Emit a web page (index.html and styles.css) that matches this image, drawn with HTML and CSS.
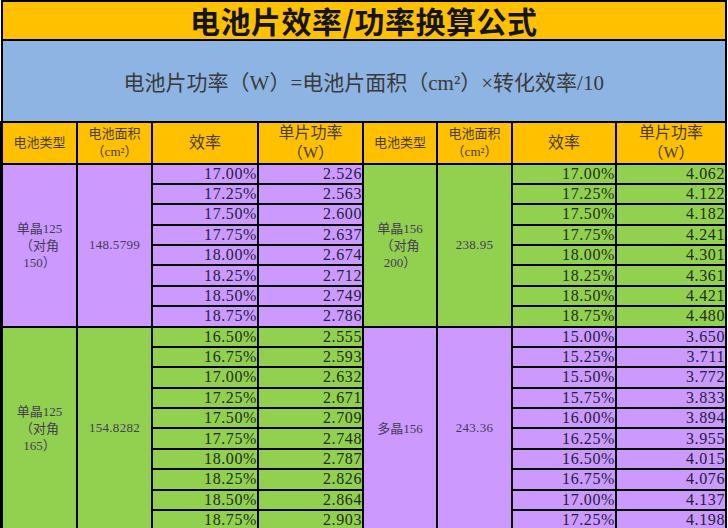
FILE: index.html
```html
<!DOCTYPE html>
<html lang="zh-CN">
<head>
<meta charset="utf-8">
<title>电池片效率/功率换算公式</title>
<link rel="stylesheet" href="styles.css">
</head>
<body>
<table class="sheet">
  <colgroup>
    <col class="c1"><col class="c2"><col class="c3"><col class="c4">
    <col class="c5"><col class="c6"><col class="c7"><col class="c8">
  </colgroup>
  <tr class="r-title"><td colspan="8" class="title">电池片效率/功率换算公式</td></tr>
  <tr class="r-formula"><td colspan="8" class="formula">电池片功率（W）=电池片面积（cm²）×转化效率/10</td></tr>
  <tr class="r-head">
    <td class="head small first">电池类型</td>
    <td class="head small">电池面积<br>（cm²）</td>
    <td class="head big">效率</td>
    <td class="head big">单片功率<br>（W）</td>
    <td class="head small">电池类型</td>
    <td class="head small">电池面积<br>（cm²）</td>
    <td class="head big">效率</td>
    <td class="head big">单片功率<br>（W）</td>
  </tr>
  <tr class="r-data">
    <td class="type purple first" rowspan="8">单晶125<br>（对角<br>150）</td>
    <td class="area purple" rowspan="8">148.5799</td>
    <td class="num purple">17.00%</td><td class="num purple">2.526</td>
    <td class="type green" rowspan="8">单晶156<br>（对角<br>200）</td>
    <td class="area green" rowspan="8">238.95</td>
    <td class="num green">17.00%</td><td class="num green">4.062</td>
  </tr>
  <tr class="r-data"><td class="num purple">17.25%</td><td class="num purple">2.563</td><td class="num green">17.25%</td><td class="num green">4.122</td></tr>
  <tr class="r-data"><td class="num purple">17.50%</td><td class="num purple">2.600</td><td class="num green">17.50%</td><td class="num green">4.182</td></tr>
  <tr class="r-data"><td class="num purple">17.75%</td><td class="num purple">2.637</td><td class="num green">17.75%</td><td class="num green">4.241</td></tr>
  <tr class="r-data"><td class="num purple">18.00%</td><td class="num purple">2.674</td><td class="num green">18.00%</td><td class="num green">4.301</td></tr>
  <tr class="r-data"><td class="num purple">18.25%</td><td class="num purple">2.712</td><td class="num green">18.25%</td><td class="num green">4.361</td></tr>
  <tr class="r-data"><td class="num purple">18.50%</td><td class="num purple">2.749</td><td class="num green">18.50%</td><td class="num green">4.421</td></tr>
  <tr class="r-data"><td class="num purple">18.75%</td><td class="num purple">2.786</td><td class="num green">18.75%</td><td class="num green">4.480</td></tr>
  <tr class="r-data">
    <td class="type green first" rowspan="10">单晶125<br>（对角<br>165）</td>
    <td class="area green" rowspan="10">154.8282</td>
    <td class="num green">16.50%</td><td class="num green">2.555</td>
    <td class="type purple" rowspan="10">多晶156</td>
    <td class="area purple" rowspan="10">243.36</td>
    <td class="num purple">15.00%</td><td class="num purple">3.650</td>
  </tr>
  <tr class="r-data"><td class="num green">16.75%</td><td class="num green">2.593</td><td class="num purple">15.25%</td><td class="num purple">3.711</td></tr>
  <tr class="r-data"><td class="num green">17.00%</td><td class="num green">2.632</td><td class="num purple">15.50%</td><td class="num purple">3.772</td></tr>
  <tr class="r-data"><td class="num green">17.25%</td><td class="num green">2.671</td><td class="num purple">15.75%</td><td class="num purple">3.833</td></tr>
  <tr class="r-data"><td class="num green">17.50%</td><td class="num green">2.709</td><td class="num purple">16.00%</td><td class="num purple">3.894</td></tr>
  <tr class="r-data"><td class="num green">17.75%</td><td class="num green">2.748</td><td class="num purple">16.25%</td><td class="num purple">3.955</td></tr>
  <tr class="r-data"><td class="num green">18.00%</td><td class="num green">2.787</td><td class="num purple">16.50%</td><td class="num purple">4.015</td></tr>
  <tr class="r-data"><td class="num green">18.25%</td><td class="num green">2.826</td><td class="num purple">16.75%</td><td class="num purple">4.076</td></tr>
  <tr class="r-data"><td class="num green">18.50%</td><td class="num green">2.864</td><td class="num purple">17.00%</td><td class="num purple">4.137</td></tr>
  <tr class="r-data"><td class="num green">18.75%</td><td class="num green">2.903</td><td class="num purple">17.25%</td><td class="num purple">4.198</td></tr>
</table>
</body>
</html>
```
FILE: styles.css
```css
html, body {
  margin: 0;
  padding: 0;
  background: #ffffff;
  overflow: hidden;
}

.sheet {
  border-collapse: collapse;
  table-layout: fixed;
  width: 727px;
  font-family: "Liberation Serif", "Noto Sans CJK SC", serif;
  color: #1e1e30;
}

.c1 { width: 75.5px; }
.c2 { width: 75px; }
.c3 { width: 106px; }
.c4 { width: 105px; }
.c5 { width: 74px; }
.c6 { width: 75px; }
.c7 { width: 104px; }
.c8 { width: 110px; }

.sheet td {
  border: 2px solid #000;
  padding: 0;
  white-space: nowrap;
}

.sheet td.first { border-left-width: 3px; }

.r-title { height: 38.5px; }
.r-formula { height: 82px; }
.r-head { height: 40px; }
.r-data { height: 20.375px; }

.title {
  border-top-width: 3px;
  border-left-width: 3px;
  background: #ffc000;
  text-align: center;
  font-family: "Noto Sans CJK SC", sans-serif;
  font-weight: 700;
  font-size: 30px;
  line-height: 34px;
  letter-spacing: 0.5px;
  color: #151515;
}

.formula {
  border-left-width: 3px;
  background: #8db4e2;
  text-align: center;
  font-size: 21px;
  color: #3a3a3a;
}

.head {
  background: #ffc000;
  text-align: center;
  color: #4a3e18;
}

.head.small {
  font-size: 13px;
  line-height: 18px;
}

.head.big {
  font-size: 16px;
  line-height: 20px;
}

.purple { background: #cc99ff; }
.green { background: #92d050; }

.type {
  text-align: center;
  font-size: 13px;
  line-height: 17px;
  color: #453c55;
}

.area {
  text-align: center;
  font-size: 13px;
  letter-spacing: 0.3px;
  color: #453c55;
}

.num {
  text-align: right;
  padding-right: 2px;
  font-size: 16px;
  line-height: 16px;
  letter-spacing: 0.6px;
  color: #22223e;
}

.green.num { color: #1f2e18; }
```
